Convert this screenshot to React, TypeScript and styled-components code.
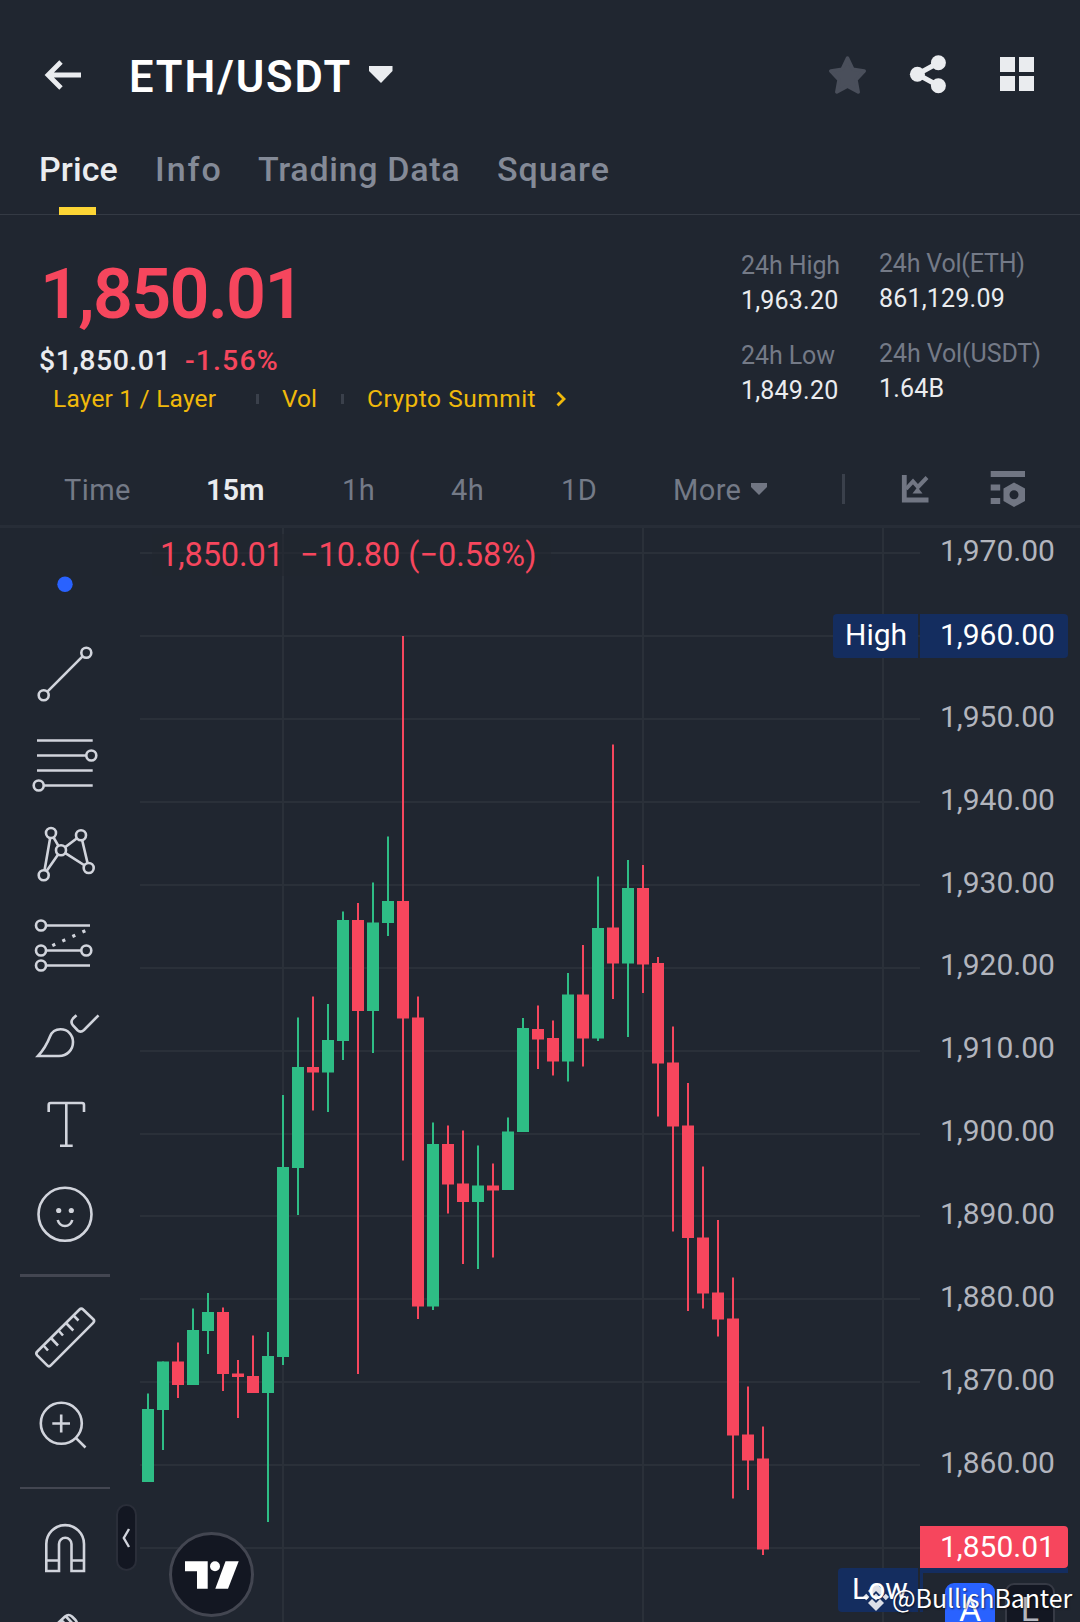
import React from 'react';
import styled, { createGlobalStyle } from 'styled-components';

const color = {
  bg: '#202630',
  text: '#eaecef',
  muted: '#848a97',
  dim: '#717683',
  red: '#f6465d',
  green: '#2ebd85',
  gold: '#f0b90b',
  grid: '#2a3039',
  navy: '#142d5f',
  tool: '#d1d4dc',
  ink: '#131722',
};

const GlobalStyle = createGlobalStyle`
  * { box-sizing: border-box; }
  body { margin: 0; background: ${color.bg}; }
`;

const Screen = styled.main`
  position: relative;
  display: flex;
  flex-direction: column;
  width: 1080px;
  height: 1622px;
  overflow: hidden;
  background: ${color.bg};
  color: ${color.text};
  font-family: Roboto, 'Liberation Sans', sans-serif;
  white-space: nowrap;
`;

const Header = styled.header`
  display: flex;
  align-items: center;
  height: 152px;
  padding: 0 45px 2px 44px;
  flex: none;
`;

const Icon = styled.svg`
  display: block;
  flex: none;
`;

const PairName = styled.h1`
  width: 240px;
  margin: 0 0 0 48px;
  padding-top: 5px;
  color: #fff;
  font-size: 43.5px;
  font-weight: 600;
  line-height: 60px;
  letter-spacing: 1.9px;
`;

const HeaderActions = styled.div`
  display: flex;
  align-items: center;
  margin-left: auto;
`;

const Tabs = styled.nav`
  display: flex;
  flex: none;
  height: 63px;
  padding-left: 39px;
  border-bottom: 1px solid #343a44;
`;

const Tab = styled.a<{ $active?: boolean; $width: number; $spacing: number }>`
  position: relative;
  width: ${p => p.$width}px;
  color: ${p => (p.$active ? color.text : color.muted)};
  font-size: 34px;
  font-weight: 500;
  line-height: 34px;
  letter-spacing: ${p => p.$spacing}px;

  &::after {
    content: '';
    display: ${p => (p.$active ? 'block' : 'none')};
    position: absolute;
    left: 20px;
    bottom: -1px;
    width: 37px;
    height: 8px;
    background: #fcd535;
  }
`;

const Summary = styled.section`
  display: flex;
  flex: none;
  height: 237px;
  padding-left: 39px;
`;

const Quote = styled.div`
  width: 702px;
  padding-top: 43px;
`;

const LastPrice = styled.div`
  height: 72px;
  padding-left: 1px;
  color: ${color.red};
  font-size: 70px;
  font-weight: 600;
  line-height: 72px;
  letter-spacing: -1.7px;
`;

const SubQuote = styled.div`
  display: flex;
  height: 48px;
  padding-top: 13px;
  font-size: 28.5px;
  font-weight: 500;
  line-height: 36px;
`;

const FiatPrice = styled.span`
  width: 146px;
  letter-spacing: 0.5px;
`;

const Change = styled.span`
  color: ${color.red};
  letter-spacing: 1.1px;
`;

const TagRow = styled.div`
  display: flex;
  align-items: center;
  height: 46px;
  padding-left: 14px;
  margin-top: -2px;
  color: ${color.gold};
  font-size: 24.5px;
  line-height: 30px;
`;

const Tag = styled.span<{ $width: number; $spacing?: number }>`
  width: ${p => p.$width}px;
  letter-spacing: ${p => p.$spacing ?? 0}px;
`;

const TagRule = styled.i<{ $after: number }>`
  width: 3px;
  height: 10px;
  margin-right: ${p => p.$after}px;
  background: #3a404b;
`;

const StatColumn = styled.dl<{ $width: number; $top: number }>`
  width: ${p => p.$width}px;
  margin: 0;
  padding-top: ${p => p.$top}px;
`;

const StatLabel = styled.dt<{ $spacing: number }>`
  height: 35px;
  color: #747a87;
  font-size: 25px;
  line-height: 34px;
  letter-spacing: ${p => p.$spacing}px;
`;

const StatValue = styled.dd`
  height: 55px;
  margin: 0;
  font-size: 25px;
  line-height: 34px;
  letter-spacing: 0.2px;
`;

const Intervals = styled.nav`
  display: grid;
  grid-template-columns: 142px 136px 109px 110px 112px 78px 91px 59px 89px 60px;
  align-items: center;
  flex: none;
  height: 76px;
  padding: 0 0 0 64px;
  border-bottom: 3px solid #272d37;
`;

const Interval = styled.a<{ $active?: boolean }>`
  height: 36px;
  color: ${p => (p.$active ? color.text : '#747a87')};
  font-size: 29px;
  font-weight: ${p => (p.$active ? 600 : 400)};
  line-height: 38px;
  letter-spacing: ${p => (p.$active ? 0 : 0.4)}px;
`;

const IntervalRule = styled.i`
  width: 3px;
  height: 30px;
  background: #3a404b;
`;

const Workspace = styled.section`
  position: relative;
  display: flex;
  flex: 1;
`;

const ToolColumn = styled.aside`
  display: flex;
  flex-direction: column;
  width: 140px;
  flex: none;
`;

const ToolGlyph = styled.svg`
  display: block;
  flex: none;
  fill: none;
  stroke: ${color.tool};
  stroke-width: 2.6;
`;

const ToolRule = styled.hr<{ $size: number; $gap: number }>`
  flex: none;
  width: 90px;
  height: ${p => p.$size}px;
  margin: ${p => p.$gap}px 0 ${p => 32 - p.$gap - p.$size}px 20px;
  border: 0;
  background: #434651;
`;

const Collapse = styled.button`
  position: absolute;
  left: 116px;
  top: 976px;
  width: 21px;
  height: 67px;
  padding: 0;
  display: grid;
  place-items: center;
  border: 2px solid #2a2e39;
  border-radius: 11px;
  background: ${color.ink};
`;

const Plot = styled.svg`
  display: block;
  flex: none;
`;

const Legend = styled.div`
  position: absolute;
  left: 152px;
  top: 6px;
  display: flex;
  width: 399px;
  height: 42px;
  padding-left: 8px;
  background: rgba(32, 38, 48, 0.55);
  color: ${color.red};
  font-size: 32.5px;
  line-height: 42px;
`;

const LegendPrice = styled.span`
  width: 140px;
  letter-spacing: -0.1px;
`;

const PriceAxis = styled.div`
  flex: 1;
  margin-top: -18px;
`;

const AxisLabel = styled.div`
  height: 82.9px;
  padding-left: 20px;
  color: #b2b5be;
  font-size: 30px;
  line-height: 82.9px;
`;

const ExtremeTag = styled.div<{ $top: number }>`
  position: absolute;
  left: 833px;
  top: ${p => p.$top}px;
  display: flex;
  gap: 2px;
  height: 44px;
  color: #fff;
  font-size: 30px;
  line-height: 42px;
`;

const ExtremeName = styled.span<{ $inset?: number }>`
  width: ${p => 85 - (p.$inset ?? 0)}px;
  margin-left: ${p => p.$inset ?? 0}px;
  padding-left: ${p => (p.$inset ? 14 : 12)}px;
  border-radius: 4px 0 0 4px;
  background: ${color.navy};
`;

const ExtremePrice = styled.span`
  width: 148px;
  padding-left: 20px;
  border-radius: 0 4px 4px 0;
  background: ${color.navy};
`;

const LowEdge = styled.span`
  width: 148px;
  border-top: 5px solid ${color.navy};
  border-left: 3px solid ${color.navy};
`;

const CurrentPrice = styled.div`
  position: absolute;
  left: 920px;
  top: 998px;
  width: 148px;
  height: 42px;
  padding-left: 20px;
  border-radius: 0 4px 4px 0;
  background: ${color.red};
  color: #fff;
  font-size: 30px;
  line-height: 41px;
`;

const ScaleButtons = styled.div`
  position: absolute;
  left: 945px;
  top: 1055px;
  display: flex;
  gap: 10px;
`;

const ScaleButton = styled.button<{ $on?: boolean }>`
  width: 50px;
  height: 50px;
  padding: 0;
  border: 2px solid ${p => (p.$on ? '#2962ff' : '#363a45')};
  border-radius: 9px;
  background: ${p => (p.$on ? '#2962ff' : color.ink)};
  color: ${p => (p.$on ? '#fff' : '#b2b5be')};
  font: 34px/48px Roboto, sans-serif;
`;

const ChartLogo = styled.div`
  position: absolute;
  left: 169px;
  top: 1004px;
  display: grid;
  place-items: center;
  width: 85px;
  height: 85px;
  border: 3px solid #434651;
  border-radius: 50%;
  background: ${color.ink};
`;

const Watermark = styled.div`
  position: absolute;
  left: 862px;
  top: 1579px;
  display: flex;
  align-items: center;
  gap: 2px;
  color: #fff;
  font: 25px/36px 'Noto Sans CJK SC', 'Noto Sans', sans-serif;
  text-shadow: 1px 1px 2px rgba(0, 0, 0, 0.6);
`;

const WatermarkName = styled.span`
  letter-spacing: -0.1px;
`;

type Candle = [up: 0 | 1, high: number, top: number, bottom: number, low: number];

const candles: Candle[] = [
  [1, 1393.5, 1409, 1482, 1482],
  [1, 1361.5, 1361.5, 1410, 1450],
  [0, 1342.5, 1361.5, 1385, 1398],
  [1, 1308.5, 1330, 1385, 1385],
  [1, 1293, 1312, 1331, 1354],
  [0, 1307.5, 1312, 1374, 1391],
  [0, 1360, 1373.5, 1377, 1418],
  [0, 1335.5, 1376, 1393, 1393],
  [1, 1332, 1356, 1393, 1522],
  [1, 1095, 1167, 1357, 1365],
  [1, 1017.5, 1067, 1168, 1215],
  [0, 996.5, 1067, 1072.5, 1110.5],
  [1, 1004, 1040, 1072.5, 1112],
  [1, 911.5, 920, 1041, 1060],
  [0, 903, 920, 1011, 1374],
  [1, 882.5, 922.5, 1011, 1053],
  [1, 836.5, 901, 923, 936],
  [0, 636, 901, 1018.5, 1160.5],
  [0, 996.5, 1017.5, 1306.5, 1319],
  [1, 1122.5, 1144, 1306.5, 1310],
  [0, 1125.5, 1144, 1184.5, 1213.5],
  [0, 1130.5, 1183.5, 1202, 1264],
  [1, 1145.5, 1185.5, 1202, 1269],
  [0, 1163.5, 1185.5, 1190.5, 1257.5],
  [1, 1117.5, 1131.5, 1190, 1190],
  [1, 1018, 1028, 1132, 1132],
  [0, 1005.5, 1029, 1039.5, 1069],
  [0, 1020.5, 1038, 1061.5, 1075.5],
  [1, 973, 994.5, 1061.5, 1081.5],
  [0, 945, 994.5, 1038.5, 1066.5],
  [1, 876.5, 928, 1038.5, 1041],
  [0, 744.5, 927.5, 963.5, 999],
  [1, 860, 888, 963.5, 1037],
  [0, 865, 888, 964.5, 993],
  [0, 957, 963, 1063.5, 1116.5],
  [0, 1026.5, 1062.5, 1126.5, 1231.5],
  [0, 1083, 1125.5, 1238, 1311],
  [0, 1166.5, 1237.5, 1293.5, 1308.5],
  [0, 1220, 1292.5, 1319.5, 1336.5],
  [0, 1277.5, 1318.5, 1435.5, 1498.5],
  [0, 1386.5, 1434.5, 1460.5, 1490],
  [0, 1426.5, 1458.5, 1549.5, 1555],
];

const rowLines = [553, 636, 719, 802, 885, 968, 1051, 1134, 1216, 1299, 1382, 1465, 1548];
const timeLines = [283, 643, 883];
const axisPrices = [
  '1,970.00', '', '1,950.00', '1,940.00', '1,930.00', '1,920.00',
  '1,910.00', '1,900.00', '1,890.00', '1,880.00', '1,870.00', '1,860.00',
];

const CandleChart = () => (
  <Plot width="780" height="1094" viewBox="140 528 780 1094">
    {rowLines.map(y => (
      <rect key={y} x="140" y={y - 1} width="780" height="2" fill={color.grid} />
    ))}
    {timeLines.map(x => (
      <rect key={x} x={x - 1} y="528" width="2" height="1094" fill={color.grid} />
    ))}
    {candles.map(([up, high, top, bottom, low], i) => {
      const x = 148 + i * 15;
      return (
        <g key={x} fill={up ? color.green : color.red}>
          <rect x={x - 1} y={high} width="2" height={low - high} />
          <rect x={x - 6} y={top} width="12" height={bottom - top} />
        </g>
      );
    })}
  </Plot>
);

const Tool = ({ top, height, children }: { top: number; height: number; children: React.ReactNode }) => (
  <ToolGlyph width="130" height={height} viewBox={`0 ${top} 130 ${height}`}>
    {children}
  </ToolGlyph>
);

const Dots = ({ at }: { at: [number, number][] }) => (
  <>
    {at.map(([x, y]) => (
      <circle key={`${x}-${y}`} cx={x} cy={y} r="5" fill={color.bg} />
    ))}
  </>
);

const DrawingTools = () => (
  <ToolColumn>
    <Tool top={528} height={101}>
      <circle cx="65" cy="584.3" r="7.7" fill="#2962ff" stroke="none" />
    </Tool>
    <Tool top={629} height={90}>
      <path d="M43.7 695.3 86.3 652.7" />
      <Dots at={[[43.7, 695.3], [86.3, 652.7]]} />
    </Tool>
    <Tool top={719} height={90}>
      <path d="M37 740.5H92.7M37 755.5H86M37 770.5H92.7M44 785.5H92.7" />
      <Dots at={[[91.3, 755.5], [38.7, 785.5]]} />
    </Tool>
    <Tool top={809} height={90}>
      <path d="M43.7 875.3 51 833 61 850.3 81 835.3 88.7 868 61 850.3Z" />
      <Dots at={[[51, 833], [81, 835.3], [61, 850.3], [88.7, 868], [43.7, 875.3]]} />
    </Tool>
    <Tool top={899} height={92}>
      <path d="M41 925.5H90M41 950.5H86M41 965.5H90" />
      <path d="M52.3 945.6 87 930" strokeDasharray="3.2 7.8" strokeWidth="3.2" />
      <Dots at={[[41, 925.5], [41, 950.5], [86.3, 950.5], [41, 965.5]]} />
    </Tool>
    <Tool top={991} height={90}>
      <path d="M38 1056C43.5 1050 47.500 1043 50 1036.500C52 1031.500 56 1029.300 60.500 1029.300C68 1029.300 73 1035 73 1042C73 1050 67 1056 59 1056Z" />
      <path d="M76.500 1015.300 73 1018.500Q70 1022 73 1025.500L77.500 1030.200Q80.500 1033 84 1030L98.500 1015.300" />
    </Tool>
    <Tool top={1081} height={88}>
      <path d="M48.700 1112V1105Q48.700 1103 50.700 1103H82Q84 1103 84 1105V1112M66.300 1103V1145.700M60 1145.700H72.700" />
    </Tool>
    <Tool top={1169} height={90}>
      <circle cx="65" cy="1214.300" r="26.500" />
      <path d="M57.700 1220C60 1228 70 1228 72.300 1220" />
      <g fill={color.tool} stroke="none">
        <circle cx="58.700" cy="1210.500" r="2.600" />
        <circle cx="71.300" cy="1210.500" r="2.600" />
      </g>
    </Tool>
    <ToolRule $size={3} $gap={15} />
    <Tool top={1291} height={90}>
      <path
        strokeLinejoin="round"
        d="M79.500 1309.500Q81.300 1307.700 83.100 1309.500L93.300 1319.200Q95 1321 93.200 1322.800L51 1365.200Q49 1367.200 47.200 1365.400L37.200 1355.300Q35.400 1353.300 37.300 1351.500Z"
      />
      <path d="M43.500 1345.500 48 1350.500M51 1338 58 1345.500M58.500 1330.500 63 1335.500M66 1323 73.300 1330.500M73.500 1315.500 78.500 1320.500" />
    </Tool>
    <Tool top={1381} height={90}>
      <circle cx="61.300" cy="1423.300" r="20.500" />
      <path d="M52.300 1423.500H70M61.200 1414.500V1432.500M75.800 1437.800 85.500 1447.500" />
    </Tool>
    <ToolRule $size={2} $gap={16} />
    <Tool top={1503} height={90}>
      <path d="M46.300 1571V1544A18.850 18.850 0 0 1 84 1544V1571H71.500V1544A6.200 6.200 0 0 0 59 1544V1571ZM46.300 1560.500H59M71.500 1560.500H84" />
    </Tool>
    <Tool top={1593} height={29}>
      <path d="M57 1624 65 1616.500Q68.500 1613.500 72 1616.500L75 1619.500Q77 1621.500 77 1624M61 1619.500 66 1625M65.500 1616 74 1625" />
    </Tool>
  </ToolColumn>
);

const intervals = ['Time', '15m', '1h', '4h', '1D', 'More'];

export default function App() {
  return (
    <Screen>
      <GlobalStyle />
      <Header>
        <Icon width="37" height="30" viewBox="0 0 37 30">
          <path d="M37 15H4M17 2 4 15 17 28" fill="none" stroke={color.text} strokeWidth="4.800" />
        </Icon>
        <PairName>ETH/USDT</PairName>
        <Icon width="24" height="20" viewBox="0 0 24 20">
          <path d="M0 1H23.500V6L12 18 0 6Z" fill={color.text} />
        </Icon>
        <HeaderActions>
          <Icon width="76" height="42" viewBox="829 54 76 42">
            <path
              d="M847.500 58 852.800 69.300 864.200 71 856 79.800 858.200 92 847.500 86.300 836.800 92 839 79.800 830.800 71 842.200 69.300Z"
              fill="#4a4f5b"
              stroke="#4a4f5b"
              strokeWidth="3.500"
              strokeLinejoin="round"
            />
          </Icon>
          <Icon width="130" height="42" viewBox="905 54 130 42">
            <g fill={color.text}>
              <path d="M938.400 62.700 917.400 74.200 938.400 85.800" fill="none" stroke={color.text} strokeWidth="5" />
              <circle cx="938.400" cy="62.700" r="7.500" />
              <circle cx="917.400" cy="74.200" r="7.500" />
              <circle cx="938.400" cy="85.800" r="7.500" />
              <path d="M1000 57h15v15h-15zM1019 57h15v15h-15zM1000 76h15v15h-15zM1019 76h15v15h-15z" />
            </g>
          </Icon>
        </HeaderActions>
      </Header>
      <Tabs>
        <Tab $active $width={116} $spacing={0.1}>Price</Tab>
        <Tab $width={103} $spacing={2}>Info</Tab>
        <Tab $width={239} $spacing={0.7}>Trading Data</Tab>
        <Tab $width={130} $spacing={1}>Square</Tab>
      </Tabs>
      <Summary>
        <Quote>
          <LastPrice>1,850.01</LastPrice>
          <SubQuote>
            <FiatPrice>$1,850.01</FiatPrice>
            <Change>-1.56%</Change>
          </SubQuote>
          <TagRow>
            <Tag $width={203} $spacing={0.2}>Layer 1 / Layer</Tag>
            <TagRule $after={23} />
            <Tag $width={59}>Vol</Tag>
            <TagRule $after={23} />
            <Tag $width={189} $spacing={0.5}>Crypto Summit</Tag>
            <Icon width="10" height="16" viewBox="0 0 10 16">
              <path d="M1.500 1.500 8 8 1.500 14.500" fill="none" stroke={color.gold} strokeWidth="2.800" />
            </Icon>
          </TagRow>
        </Quote>
        <StatColumn $width={138} $top={34}>
          <StatLabel $spacing={-0.1}>24h High</StatLabel>
          <StatValue>1,963.20</StatValue>
          <StatLabel $spacing={-0.1}>24h Low</StatLabel>
          <StatValue>1,849.20</StatValue>
        </StatColumn>
        <StatColumn $width={190} $top={32}>
          <StatLabel $spacing={-0.2}>24h Vol(ETH)</StatLabel>
          <StatValue>861,129.09</StatValue>
          <StatLabel $spacing={-0.1}>24h Vol(USDT)</StatLabel>
          <StatValue>1.64B</StatValue>
        </StatColumn>
      </Summary>
      <Intervals>
        {intervals.map(name => (
          <Interval key={name} $active={name === '15m'}>{name}</Interval>
        ))}
        <Icon width="16" height="12" viewBox="0 0 16 12">
          <path d="M0 0H16V4L8 12 0 4Z" fill={color.dim} />
        </Icon>
        <IntervalRule />
        <Icon width="28" height="30" viewBox="901 472 28 30">
          <path d="M904.300 473V498H928.500" fill="none" stroke={color.dim} strokeWidth="4.800" />
          <path d="M906 487 913 479.500 918 485 927 475.500" fill="none" stroke={color.dim} strokeWidth="4" />
          <path d="M917.500 485 922.500 491.500H912.500Z" fill={color.dim} />
        </Icon>
        <Icon width="35" height="38" viewBox="990 469 35 38">
          <path d="M990.700 470h34.300v6h-34.300zM990.700 483.500h9.500v6h-9.500zM990.700 497h9.500v6h-9.500z" fill={color.dim} />
          <path
            fillRule="evenodd"
            d="M1014 481.500 1025 487.500V500L1014 506 1003.500 500V487.500ZM1014 489.300A4.500 4.500 0 1 0 1014 498.300 4.500 4.500 0 1 0 1014 489.300Z"
            fill={color.dim}
          />
        </Icon>
      </Intervals>
      <Workspace>
        <DrawingTools />
        <CandleChart />
        <PriceAxis>
          {axisPrices.map((price, i) => (
            <AxisLabel key={i}>{price}</AxisLabel>
          ))}
        </PriceAxis>
        <Legend>
          <LegendPrice>1,850.01</LegendPrice>
          <span>−10.80 (−0.58%)</span>
        </Legend>
        <ExtremeTag $top={86}>
          <ExtremeName>High</ExtremeName>
          <ExtremePrice>1,960.00</ExtremePrice>
        </ExtremeTag>
        <ExtremeTag $top={1040}>
          <ExtremeName $inset={5}>Low</ExtremeName>
          <LowEdge />
        </ExtremeTag>
        <CurrentPrice>1,850.01</CurrentPrice>
        <ScaleButtons>
          <ScaleButton $on>A</ScaleButton>
          <ScaleButton>L</ScaleButton>
        </ScaleButtons>
        <Collapse>
          <Icon width="9" height="20" viewBox="0 0 9 20">
            <path d="M7 1 1.800 10 7 19" fill="none" stroke={color.tool} strokeWidth="2.400" />
          </Icon>
        </Collapse>
        <ChartLogo>
          <Icon width="54" height="28" viewBox="185 1562 54 28">
            <g fill="#fff">
              <path d="M185 1562.300H207.700V1589.700H197V1572.300H185Z" />
              <circle cx="215" cy="1567.300" r="5" />
              <path d="M225.500 1562.300H238.700L228 1589.700H215.300Z" />
            </g>
          </Icon>
        </ChartLogo>
      </Workspace>
      <Watermark>
        <Icon width="28" height="30" viewBox="862 1583 28 30">
          <g fill="#fff" opacity="0.850">
            <path d="M876 1584 884 1592 880 1596 876 1592 872 1596 868 1592Z" />
            <path d="M876 1594.500 879.500 1598 876 1601.500 872.500 1598Z" />
            <path d="M866.200 1594.800 869.400 1598 866.200 1601.200 863 1598ZM885.800 1594.800 889 1598 885.800 1601.200 882.600 1598Z" />
            <path d="M872 1600 876 1604 880 1600 884 1604 876 1612 868 1604Z" />
          </g>
        </Icon>
        <WatermarkName>@BullishBanter</WatermarkName>
      </Watermark>
    </Screen>
  );
}
